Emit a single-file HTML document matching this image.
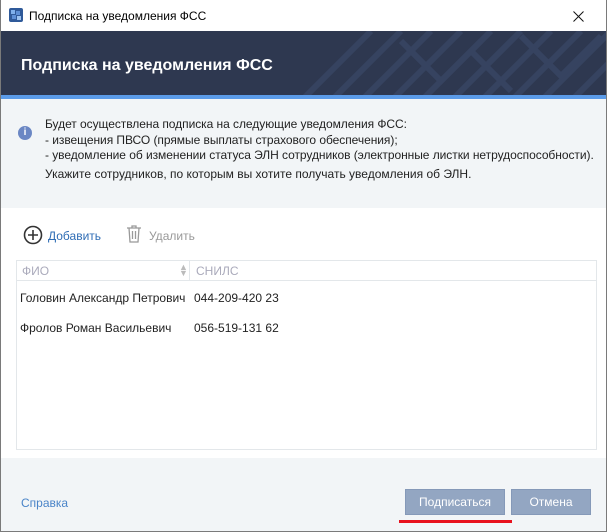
<!DOCTYPE html>
<html><head><meta charset="utf-8"><style>
*{margin:0;padding:0;box-sizing:border-box}
body{width:607px;height:532px;position:relative;overflow:hidden;background:#fff;font-family:"Liberation Sans",sans-serif;font-size:12px;color:#222}
.abs{position:absolute;white-space:nowrap}
.win{position:absolute;left:0;top:0;width:607px;height:532px;border:1px solid #7a7a7a;border-top:none}
</style></head><body>
<div class="abs" style="left:0;top:0;width:607px;height:31px;background:#fff"></div>
<svg class="abs" style="left:8px;top:7px" width="16" height="16"><rect x="1" y="1" width="14" height="14" rx="2" fill="#2f5a9a"/><rect x="3" y="3" width="4" height="4" fill="#7fb0ec"/><rect x="8" y="4" width="4" height="4" fill="#5d8fd6"/><rect x="4" y="8" width="4" height="4" fill="#5d8fd6"/><rect x="9" y="9" width="4" height="4" fill="#9cc3f1"/></svg>
<div class="abs" style="left:29px;top:9px;font-size:12px;color:#000">Подписка на уведомления ФСС</div>
<svg class="abs" style="left:573px;top:11px" width="11" height="11"><path d="M0.5 0.5L10.5 10.5M10.5 0.5L0.5 10.5" stroke="#111" stroke-width="1"/></svg>
<div class="abs" style="left:1px;top:31px;width:605px;height:64px;background:#2e3850;overflow:hidden">
<svg width="605" height="64" style="position:absolute;left:0;top:0"><g stroke="#364360" stroke-width="6" fill="none">
<path d="M300 70L370 0M330 70L400 0M360 70L430 0M390 70L460 0M420 70L490 0M450 70L520 0M480 70L550 0M510 70L580 0M540 70L610 0M570 70L640 0"/>
<path d="M400 10L440 50L480 10M470 20L510 60M520 5L560 45L600 5"/></g></svg>
</div>
<div class="abs" style="left:21px;top:57px;font-size:16px;font-weight:bold;color:#fff">Подписка на уведомления ФСС</div>
<div class="abs" style="left:1px;top:95px;width:605px;height:4px;background:#5b9be8"></div>
<div class="abs" style="left:1px;top:99px;width:605px;height:109px;background:#f2f5f7"></div>
<div class="abs" style="left:18px;top:126px;width:14px;height:14px;border-radius:50%;background:#6b87c4;color:#fff;font-size:10px;font-weight:bold;text-align:center;line-height:14px">i</div>
<div class="abs" style="left:45px;top:117px;line-height:15.5px;color:#222;letter-spacing:-0.05px">Будет осуществлена подписка на следующие уведомления ФСС:<br>- извещения ПВСО (прямые выплаты страхового обеспечения);<br>- уведомление об изменении статуса ЭЛН сотрудников (электронные листки нетрудоспособности).</div>
<div class="abs" style="left:45px;top:167px;color:#222">Укажите сотрудников, по которым вы хотите получать уведомления об ЭЛН.</div>
<svg class="abs" style="left:23px;top:225px" width="20" height="20"><circle cx="10" cy="10" r="8.5" stroke="#333" stroke-width="1.6" fill="none"/><path d="M10 5V15M5 10H15" stroke="#333" stroke-width="1.6"/></svg>
<div class="abs" style="left:48px;top:229px;color:#2f6db5">Добавить</div>
<svg class="abs" style="left:126px;top:224px" width="16" height="20"><path d="M1 4H15M6 4V2H10V4M3 4L4 18H12L13 4M6.5 7V15M9.5 7V15" stroke="#999" stroke-width="1.3" fill="none"/></svg>
<div class="abs" style="left:149px;top:229px;color:#999">Удалить</div>
<div class="abs" style="left:16px;top:260px;width:581px;height:190px;border:1px solid #e3e7ea"></div>
<div class="abs" style="left:17px;top:261px;width:579px;height:20px;border-bottom:1px solid #e3e7ea"></div>
<div class="abs" style="left:189px;top:261px;width:1px;height:20px;background:#e3e7ea"></div>
<div class="abs" style="left:22px;top:264px;color:#aab">ФИО</div>
<div class="abs" style="left:179px;top:264px;color:#bbb;font-size:9px;line-height:6px">▲<br>▼</div>
<div class="abs" style="left:196px;top:264px;color:#aab">СНИЛС</div>
<div class="abs" style="left:20px;top:291px">Головин Александр Петрович</div>
<div class="abs" style="left:194px;top:291px">044-209-420 23</div>
<div class="abs" style="left:20px;top:321px">Фролов Роман Васильевич</div>
<div class="abs" style="left:194px;top:321px">056-519-131 62</div>
<div class="abs" style="left:1px;top:458px;width:605px;height:74px;background:#f2f5f7"></div>
<div class="abs" style="left:21px;top:496px;color:#4a84c8">Справка</div>
<div class="abs" style="left:405px;top:489px;width:100px;height:26px;background:#93a6c2;border:1px solid #8599b8;color:#fff;text-align:center;line-height:24px">Подписаться</div>
<div class="abs" style="left:511px;top:489px;width:80px;height:26px;background:#93a6c2;border:1px solid #8599b8;color:#fff;text-align:center;line-height:24px">Отмена</div>
<div class="abs" style="left:399px;top:520px;width:113px;height:3px;background:#e8121e"></div>
<div class="win"></div>
</body></html>
